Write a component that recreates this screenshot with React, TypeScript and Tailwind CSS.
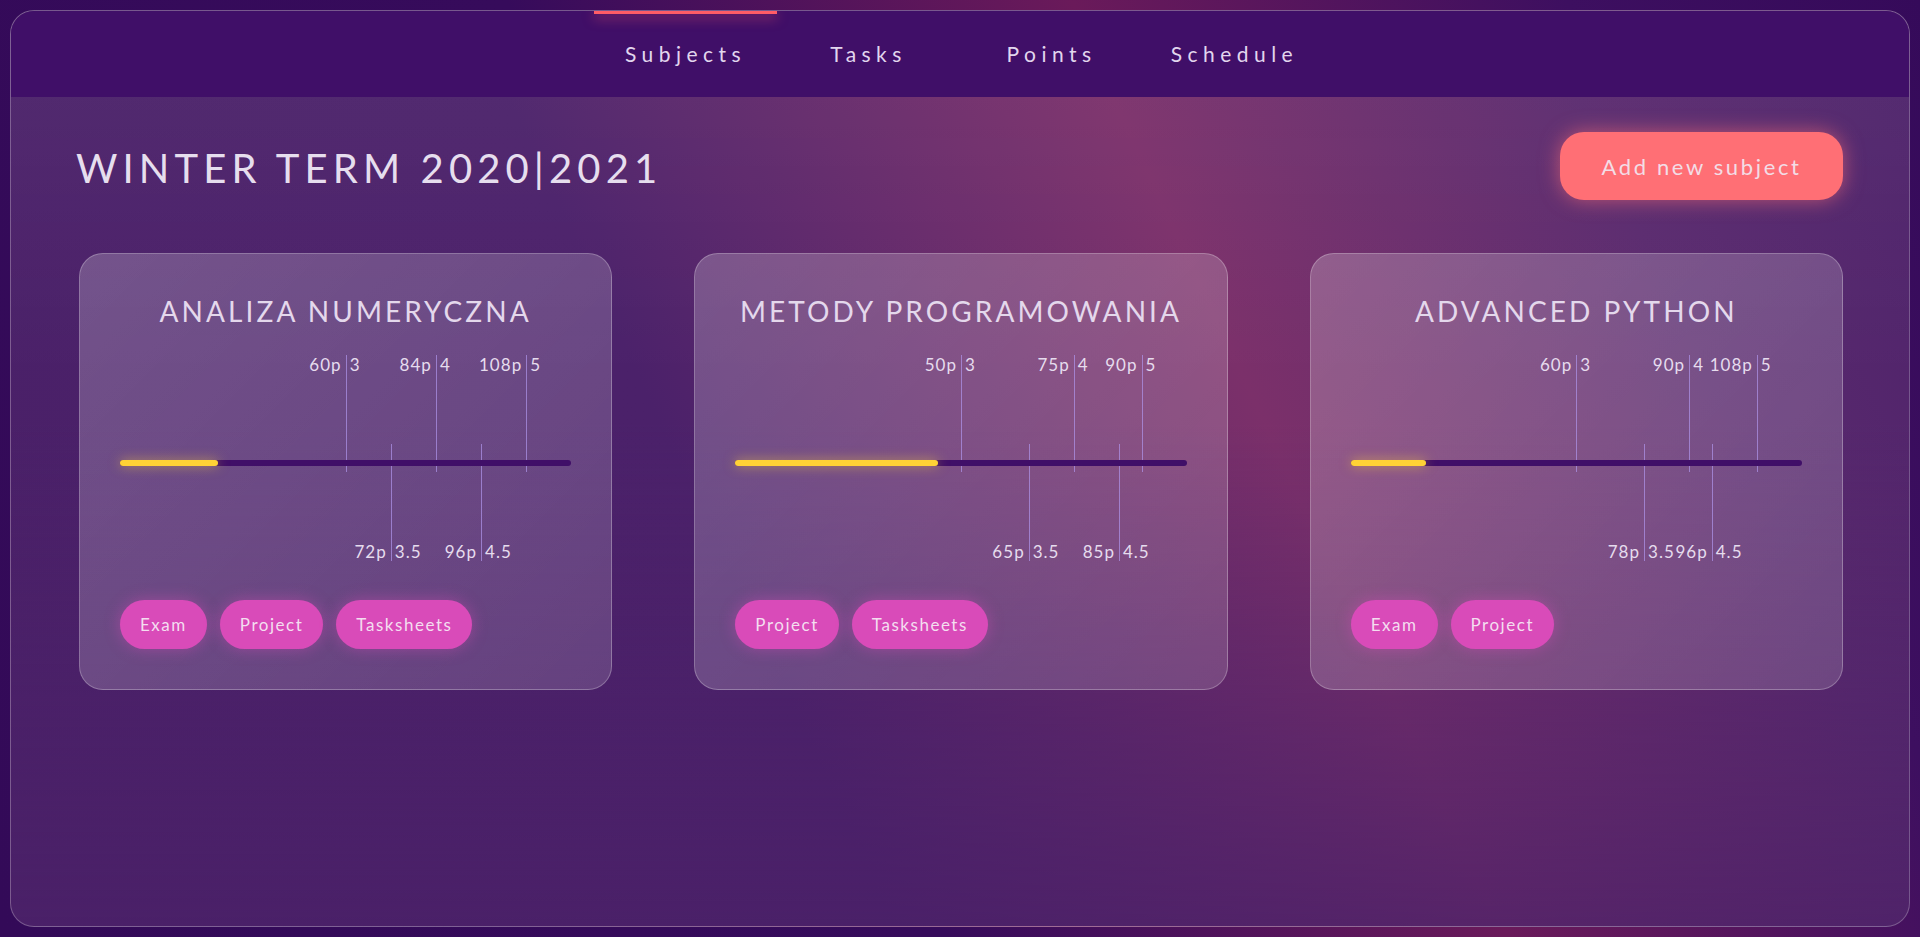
import React from 'react'

type Mark = { points: number; grade: string }

interface Subject {
    name: string
    max: number
    value: number
    upper: Mark[]
    lower: Mark[]
    tags: string[]
}

const subjects: Subject[] = [
    {
        name: 'ANALIZA NUMERYCZNA',
        max: 120,
        value: 26,
        upper: [{ points: 60, grade: '3' }, { points: 84, grade: '4' }, { points: 108, grade: '5' }],
        lower: [{ points: 72, grade: '3.5' }, { points: 96, grade: '4.5' }],
        tags: ['Exam', 'Project', 'Tasksheets'],
    },
    {
        name: 'METODY PROGRAMOWANIA',
        max: 100,
        value: 45,
        upper: [{ points: 50, grade: '3' }, { points: 75, grade: '4' }, { points: 90, grade: '5' }],
        lower: [{ points: 65, grade: '3.5' }, { points: 85, grade: '4.5' }],
        tags: ['Project', 'Tasksheets'],
    },
    {
        name: 'ADVANCED PYTHON',
        max: 120,
        value: 20,
        upper: [{ points: 60, grade: '3' }, { points: 90, grade: '4' }, { points: 108, grade: '5' }],
        lower: [{ points: 78, grade: '3.5' }, { points: 96, grade: '4.5' }],
        tags: ['Exam', 'Project'],
    },
]

const navItems = ['Subjects', 'Tasks', 'Points', 'Schedule']

function MarkLine({ mark, max, below }: { mark: Mark; max: number; below?: boolean }) {
    return (
        <div
            className={`absolute w-px h-[117px] bg-[rgba(175,150,235,0.7)] ${below ? 'top-[89px]' : 'top-0'}`}
            style={{ left: `${(mark.points / max) * 100}%` }}
        >
            <span className={`absolute right-full pr-1 whitespace-nowrap leading-6 ${below ? 'bottom-[-3px]' : 'top-[-2px]'}`}>
                {mark.points}p
            </span>
            <span className={`absolute left-full pl-[3px] whitespace-nowrap leading-6 ${below ? 'bottom-[-3px]' : 'top-[-2px]'}`}>
                {mark.grade}
            </span>
        </div>
    )
}

function SubjectCard({ subject }: { subject: Subject }) {
    return (
        <div className="rounded-3xl border border-white/25 bg-[linear-gradient(135deg,rgba(255,255,255,0.22),rgba(255,255,255,0.15))] px-10 pt-10 pb-10">
            <h2 className="text-center text-[28px] leading-[34px] tracking-[0.11em] text-[#e4d8ec]">{subject.name}</h2>

            {/* Grade scale */}
            <div className="relative mt-[27px] h-[206px] text-[17px] tracking-[0.06em] text-[#e6dcee]">
                {subject.upper.map(m => <MarkLine key={m.points} mark={m} max={subject.max} />)}
                {subject.lower.map(m => <MarkLine key={m.points} mark={m} max={subject.max} below />)}
                <div className="absolute left-0 right-0 top-[105px] h-[6px] rounded-full bg-[#400f68]">
                    <div
                        className="h-full rounded-full bg-[#ffd236] shadow-[0_0_12px_rgba(255,210,54,0.55)]"
                        style={{ width: `${(subject.value / subject.max) * 100}%` }}
                    />
                </div>
            </div>

            <div className="mt-[39px] flex gap-[13px]">
                {subject.tags.map(tag => (
                    <span
                        key={tag}
                        className="flex h-[49px] items-center rounded-full bg-[#d94bb9] px-5 text-[17px] tracking-[0.09em] text-[#f4def0] shadow-[0_0_16px_rgba(217,75,185,0.45)]"
                    >
                        {tag}
                    </span>
                ))}
            </div>
        </div>
    )
}

export default function App() {
    return (
        <div className="h-screen p-[10px] font-['Lato','Noto_Sans',sans-serif] bg-[linear-gradient(65deg,#330a58_0%,#360b5b_40%,#6a1a5a_64%,#3d0f60_85%,#350a5a_100%)]">
            <div className="flex h-full flex-col overflow-hidden rounded-3xl border border-white/25 bg-[linear-gradient(180deg,rgba(255,255,255,0.05)_0%,rgba(255,255,255,0)_40%,rgba(74,32,104,0)_45%,rgba(74,32,104,0.75)_100%),linear-gradient(65deg,#4a2068_0%,#4b216a_38%,#7b306a_64%,#5a2a6e_84%,#4c216a_100%)]">
                {/* Nav */}
                <nav className="flex h-[86px] shrink-0 justify-center bg-[#400f68]">
                    {navItems.map((item, i) => (
                        <div key={item} className="relative flex w-[183px] items-center justify-center">
                            {i === 0 && (
                                <span className="absolute left-0 right-0 top-[-1px] h-1 bg-[#ff5c66] shadow-[0_4px_12px_rgba(255,92,102,0.55)]" />
                            )}
                            <span className="text-[21px] tracking-[0.26em] text-[#e2d6ee]">{item}</span>
                        </div>
                    ))}
                </nav>

                {/* Content */}
                <div className="pl-[68px] pr-[66px] pt-[35px]">
                    <div className="flex items-center justify-between">
                        <h1 className="-ml-[3px] pt-1 text-[40px] leading-[48px] tracking-[0.128em] text-[#e6deee]">WINTER TERM 2020|2021</h1>
                        <button className="h-[68px] w-[283px] rounded-3xl bg-[#ff6f75] text-[22px] tracking-[0.12em] text-[#f3dde6] shadow-[0_0_20px_rgba(255,111,117,0.6)]">
                            Add new subject
                        </button>
                    </div>

                    <div className="mt-[53px] grid grid-cols-3 gap-[82px]">
                        {subjects.map(s => <SubjectCard key={s.name} subject={s} />)}
                    </div>
                </div>
            </div>
        </div>
    )
}
